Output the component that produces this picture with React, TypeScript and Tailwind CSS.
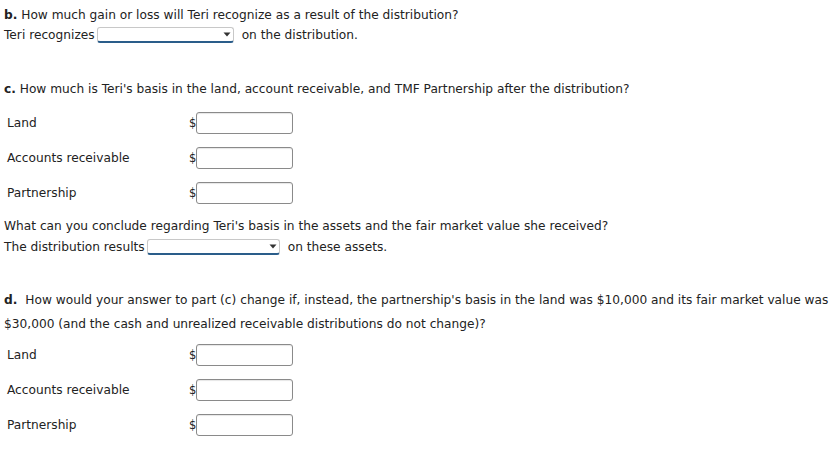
import React from "react";

function Select({ w }: { w: string }) {
  return (
    <span className={`relative inline-block h-[16px] ${w} align-middle rounded-[3px] border border-[#c8c8c8] border-b-2 border-b-[#2a5d8a] bg-white mx-[2px]`}>
      <svg className="absolute right-[2px] top-[4px]" width="8" height="5" viewBox="0 0 8 5">
        <path d="M0.5 0.5 L7.5 0.5 L4 4.5 Z" fill="#333" />
      </svg>
    </span>
  );
}

function Row({ label }: { label: string }) {
  return (
    <div className="flex items-center h-[35px] pl-[3px]">
      <div className="w-[182px]">{label}</div>
      <span className="text-[11.5px] mt-[1px]">$</span>
      <span className="inline-block w-[97px] h-[22px] rounded-[3px] border border-[#8a8a8a] bg-white shadow-[inset_0_1px_1px_rgba(0,0,0,0.1)]" />
    </div>
  );
}

export default function App() {
  return (
    <div className="w-[838px] h-[455px] bg-white text-[#222] text-[12.2px] leading-[20px] pl-[4px] pt-[5px]" style={{ fontFamily: '"DejaVu Sans", Verdana, sans-serif' }}>
      <div><b>b.</b> How much gain or loss will Teri recognize as a result of the distribution?</div>
      <div className="flex items-center">
        <span>Teri recognizes</span>
        <Select w="w-[137px]" />
        <span className="ml-[6px]">on the distribution.</span>
      </div>
      <div className="mt-[34px]"><b>c.</b> How much is Teri's basis in the land, account receivable, and TMF Partnership after the distribution?</div>
      <div className="mt-[6px]">
        <Row label="Land" />
        <Row label="Accounts receivable" />
        <Row label="Partnership" />
      </div>
      <div className="mt-[6px]">What can you conclude regarding Teri's basis in the assets and the fair market value she received?</div>
      <div className="flex items-center mt-[1px]">
        <span>The distribution results</span>
        <Select w="w-[133px]" />
        <span className="ml-[6px]">on these assets.</span>
      </div>
      <div className="mt-[31px] leading-[24px] pr-[4px]"><b className="mr-[8px]">d.</b>How would your answer to part (c) change if, instead, the partnership's basis in the land was $10,000 and its fair market value was $30,000 (and the cash and unrealized receivable distributions do not change)?</div>
      <div className="mt-[1px]">
        <Row label="Land" />
        <Row label="Accounts receivable" />
        <Row label="Partnership" />
      </div>
    </div>
  );
}
